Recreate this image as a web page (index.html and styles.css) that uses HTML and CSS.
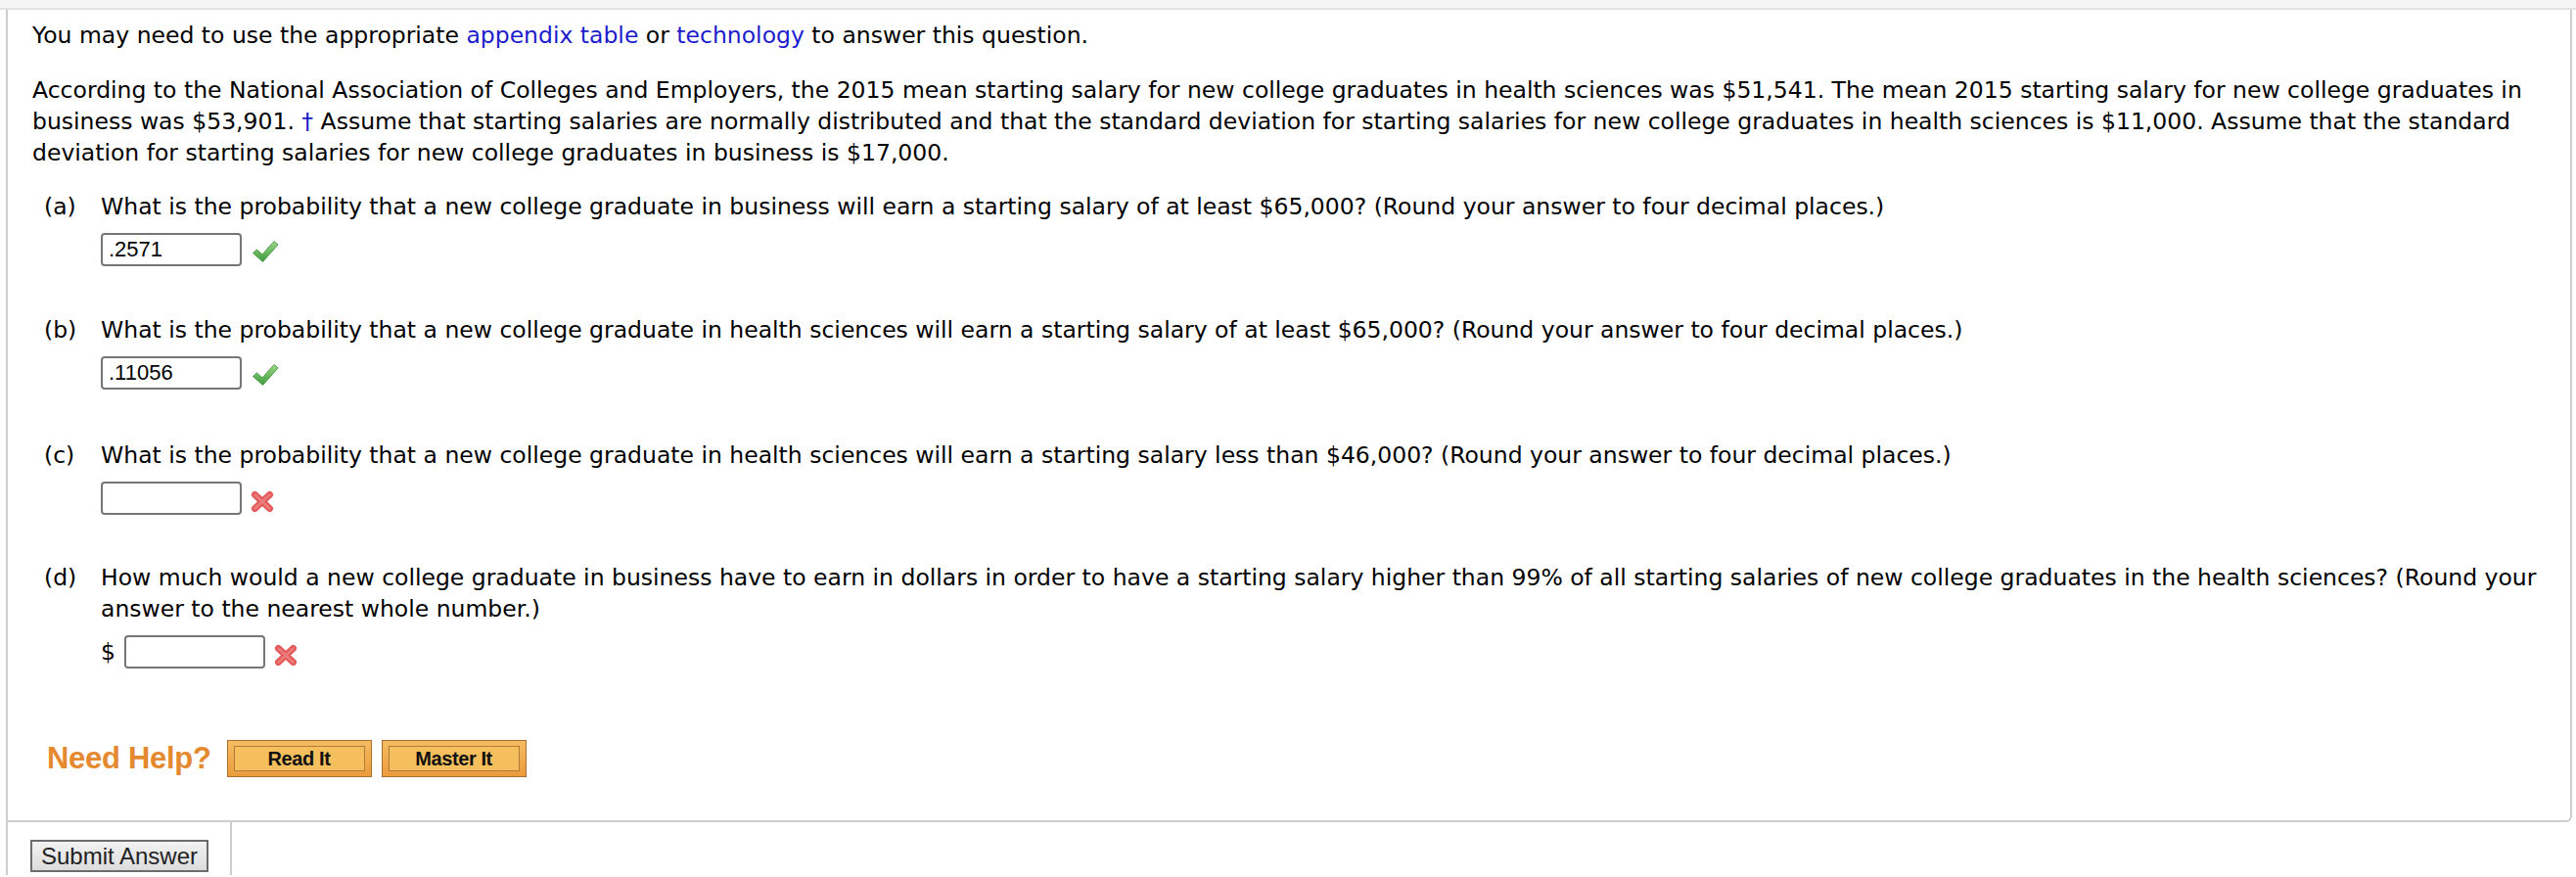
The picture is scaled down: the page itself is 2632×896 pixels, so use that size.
FILE: index.html
```html
<!DOCTYPE html>
<html lang="en">
<head>
<meta charset="utf-8">
<title>Question</title>
<link rel="stylesheet" href="styles.css">
</head>
<body>
<div class="topband"></div>
<div class="panel">
  <p class="intro">You may need to use the appropriate <a class="link" href="#">appendix table</a> or <a class="link" href="#">technology</a> to answer this question.</p>
  <p class="stem"><span>According to the National Association of Colleges and Employers, the 2015 mean starting salary for new college graduates in health sciences was $51,541. The mean 2015 starting salary for new college graduates in business was $53,901.</span> <a class="link" href="#">&dagger;</a> <span>Assume that starting salaries are normally distributed and that the standard deviation for starting salaries for new college graduates in health sciences is $11,000. Assume that the standard deviation for starting salaries for new college graduates in business is $17,000.</span></p>

  <div class="part pa">
    <span class="label">(a)</span>
    <div class="pbody">
      <div class="q">What is the probability that a new college graduate in business will earn a starting salary of at least $65,000? (Round your answer to four decimal places.)</div>
      <div class="ans">
        <span class="field">.2571</span>
        <svg class="check" width="28" height="24" viewBox="0 0 28 24"><defs><linearGradient id="g1" x1="0" y1="0" x2="0" y2="1"><stop offset="0" stop-color="#9ad88a"/><stop offset="1" stop-color="#3f9a3c"/></linearGradient></defs><path d="M1.5 13.5 L5.5 10 L11 15 L23 1.5 L27 5 L11.5 22.5 Z" fill="url(#g1)" stroke="#4f9e48" stroke-width="1" stroke-linejoin="round"/></svg>
      </div>
    </div>
  </div>

  <div class="part pb">
    <span class="label">(b)</span>
    <div class="pbody">
      <div class="q">What is the probability that a new college graduate in health sciences will earn a starting salary of at least $65,000? (Round your answer to four decimal places.)</div>
      <div class="ans">
        <span class="field">.11056</span>
        <svg class="check" width="28" height="24" viewBox="0 0 28 24"><defs><linearGradient id="g2" x1="0" y1="0" x2="0" y2="1"><stop offset="0" stop-color="#9ad88a"/><stop offset="1" stop-color="#3f9a3c"/></linearGradient></defs><path d="M1.5 13.5 L5.5 10 L11 15 L23 1.5 L27 5 L11.5 22.5 Z" fill="url(#g2)" stroke="#4f9e48" stroke-width="1" stroke-linejoin="round"/></svg>
      </div>
    </div>
  </div>

  <div class="part pc">
    <span class="label">(c)</span>
    <div class="pbody">
      <div class="q">What is the probability that a new college graduate in health sciences will earn a starting salary less than $46,000? (Round your answer to four decimal places.)</div>
      <div class="ans">
        <span class="field"></span>
        <svg class="cross" width="24" height="23" viewBox="0 0 24 23"><g stroke-linecap="round"><path d="M4.5 4.5 L19.5 18.5 M19.5 4.5 L4.5 18.5" stroke="#e45a5a" stroke-width="7"/><path d="M4.5 4.5 L19.5 18.5 M19.5 4.5 L4.5 18.5" stroke="#f08a8a" stroke-width="2.5" opacity="0.7"/></g></svg>
      </div>
    </div>
  </div>

  <div class="part pd">
    <span class="label">(d)</span>
    <div class="pbody">
      <div class="q">How much would a new college graduate in business have to earn in dollars in order to have a starting salary higher than 99% of all starting salaries of new college graduates in the health sciences? (Round your answer to the nearest whole number.)</div>
      <div class="ans">
        <span class="dollar">$</span>
        <span class="field">&nbsp;</span>
        <svg class="cross" width="24" height="23" viewBox="0 0 24 23"><g stroke-linecap="round"><path d="M4.5 4.5 L19.5 18.5 M19.5 4.5 L4.5 18.5" stroke="#e45a5a" stroke-width="7"/><path d="M4.5 4.5 L19.5 18.5 M19.5 4.5 L4.5 18.5" stroke="#f08a8a" stroke-width="2.5" opacity="0.7"/></g></svg>
      </div>
    </div>
  </div>

  <div class="help">
    <span class="need">Need Help?</span>
    <a class="hbtn" href="#"><span class="hinner">Read It</span></a>
    <a class="hbtn" href="#"><span class="hinner">Master It</span></a>
  </div>
</div>
<div class="submitrow">
  <div class="submitcell">
    <button class="submit" type="button">Submit Answer</button>
  </div>
</div>
</body>
</html>
```

FILE: styles.css
```css
html, body {
  margin: 0;
  padding: 0;
  background: #ffffff;
}
body {
  font-family: "DejaVu Sans", Verdana, sans-serif;
  font-size: 23.5px;
  line-height: 32px;
  color: #000000;
}
.topband {
  height: 8px;
  background: #f5f5f5;
  border-bottom: 2px solid #e2e2e2;
}
.panel {
  box-sizing: border-box;
  width: 2622px;
  margin-left: 6px;
  border-left: 2px solid #cecece;
  border-right: 2px solid #cecece;
  border-bottom: 2px solid #cecece;
  border-bottom-right-radius: 6px;
  padding: 10px 20px 44px 25px;
}
.intro, .stem {
  margin: 0;
}
.stem {
  margin-top: 24px;
}
.link {
  color: #1c1ccc;
  text-decoration: none;
}
.part {
  display: flex;
  margin-left: 12px;
}
.pa { margin-top: 23px; }
.pb { margin-top: 49px; }
.pc { margin-top: 51px; }
.pd { margin-top: 48px; }
.label {
  flex: 0 0 58px;
}
.pbody {
  flex: 1 1 auto;
}
.ans {
  display: flex;
  align-items: center;
  margin-top: 11px;
  height: 34px;
}
.field {
  box-sizing: border-box;
  display: inline-block;
  width: 144px;
  height: 34px;
  border: 2px solid #767676;
  border-radius: 4px;
  padding: 0 6px;
  font-family: "Liberation Sans", Arial, sans-serif;
  font-size: 22px;
  line-height: 30px;
  color: #000;
}
.dollar {
  width: 24px;
}
.check {
  margin-left: 10px;
  margin-top: 4px;
}
.cross {
  margin-left: 9px;
  margin-top: 6px;
}
.help {
  display: flex;
  align-items: center;
  margin-top: 73px;
  margin-left: 15px;
  height: 38px;
}
.need {
  font-family: "Liberation Sans", Arial, sans-serif;
  font-weight: bold;
  font-size: 31px;
  color: #e4892f;
  margin-right: 16px;
  letter-spacing: -0.3px;
}
.hbtn {
  box-sizing: border-box;
  display: flex;
  width: 148px;
  height: 38px;
  padding: 5px 6px;
  margin-right: 10px;
  border: 1px solid #a8702e;
  background: linear-gradient(#f6bc62, #eb9b3c);
  text-decoration: none;
}
.hinner {
  box-sizing: border-box;
  flex: 1;
  display: flex;
  align-items: center;
  justify-content: center;
  border: 1px solid #b27a3a;
  background: #f4bf5c;
  font-family: "Liberation Sans", Arial, sans-serif;
  font-weight: bold;
  font-size: 20px;
  color: #111;
  letter-spacing: -0.4px;
}
.submitrow {
  height: 54px;
}
.submitcell {
  box-sizing: border-box;
  width: 231px;
  height: 54px;
  margin-left: 6px;
  border-left: 2px solid #cecece;
  border-right: 2px solid #cecece;
  padding: 18px 0 0 23px;
}
.submit {
  box-sizing: border-box;
  width: 182px;
  height: 33px;
  border: 2px solid #6c6c6c;
  background: linear-gradient(#f2f2f2, #dcdcdc);
  font-family: "Liberation Sans", Arial, sans-serif;
  font-size: 24px;
  color: #222;
  padding: 0;
  margin: 0;
  line-height: 28px;
}
```
